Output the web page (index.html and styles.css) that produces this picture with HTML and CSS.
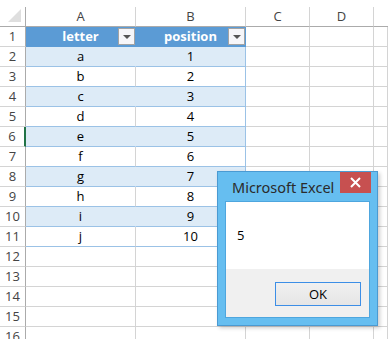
FILE: index.html
```html
<!DOCTYPE html>
<html>
<head>
	<title>Microsoft Excel</title>
	<meta charset="utf-8">
	<link rel="stylesheet" href="styles.css">
</head>
<body>
	<div class="sheet">
		<div class="row col_head">
			<div class="rh corner"><span class="corner_tri"></span></div>
			<div class="ch">A</div>
			<div class="ch">B</div>
			<div class="ch">C</div>
			<div class="ch">D</div>
			<div class="ch last"></div>
		</div>
		<div class="row">
			<div class="rh">1</div>
			<div class="c th a"><span class="th_text">letter</span><span class="filter"></span></div>
			<div class="c th b"><span class="th_text">position</span><span class="filter"></span></div>
			<div class="c"></div>
			<div class="c"></div>
			<div class="c"></div>
		</div>
		<div class="row band">
			<div class="rh">2</div>
			<div class="c td a">a</div>
			<div class="c td b">1</div>
			<div class="c"></div><div class="c"></div><div class="c"></div>
		</div>
		<div class="row">
			<div class="rh">3</div>
			<div class="c td a">b</div>
			<div class="c td b">2</div>
			<div class="c"></div><div class="c"></div><div class="c"></div>
		</div>
		<div class="row band">
			<div class="rh">4</div>
			<div class="c td a">c</div>
			<div class="c td b">3</div>
			<div class="c"></div><div class="c"></div><div class="c"></div>
		</div>
		<div class="row">
			<div class="rh">5</div>
			<div class="c td a">d</div>
			<div class="c td b">4</div>
			<div class="c"></div><div class="c"></div><div class="c"></div>
		</div>
		<div class="row band">
			<div class="rh active">6</div>
			<div class="c td a">e</div>
			<div class="c td b">5</div>
			<div class="c"></div><div class="c"></div><div class="c"></div>
		</div>
		<div class="row">
			<div class="rh">7</div>
			<div class="c td a">f</div>
			<div class="c td b">6</div>
			<div class="c"></div><div class="c"></div><div class="c"></div>
		</div>
		<div class="row band">
			<div class="rh">8</div>
			<div class="c td a">g</div>
			<div class="c td b">7</div>
			<div class="c"></div><div class="c"></div><div class="c"></div>
		</div>
		<div class="row">
			<div class="rh">9</div>
			<div class="c td a">h</div>
			<div class="c td b">8</div>
			<div class="c"></div><div class="c"></div><div class="c"></div>
		</div>
		<div class="row band">
			<div class="rh">10</div>
			<div class="c td a">i</div>
			<div class="c td b">9</div>
			<div class="c"></div><div class="c"></div><div class="c"></div>
		</div>
		<div class="row">
			<div class="rh">11</div>
			<div class="c td a">j</div>
			<div class="c td b">10</div>
			<div class="c"></div><div class="c"></div><div class="c"></div>
		</div>
		<div class="row">
			<div class="rh">12</div>
			<div class="c"></div><div class="c"></div><div class="c"></div><div class="c"></div><div class="c"></div>
		</div>
		<div class="row">
			<div class="rh">13</div>
			<div class="c"></div><div class="c"></div><div class="c"></div><div class="c"></div><div class="c"></div>
		</div>
		<div class="row">
			<div class="rh">14</div>
			<div class="c"></div><div class="c"></div><div class="c"></div><div class="c"></div><div class="c"></div>
		</div>
		<div class="row">
			<div class="rh">15</div>
			<div class="c"></div><div class="c"></div><div class="c"></div><div class="c"></div><div class="c"></div>
		</div>
		<div class="row">
			<div class="rh">16</div>
			<div class="c"></div><div class="c"></div><div class="c"></div><div class="c"></div><div class="c"></div>
		</div>
	</div>

	<div class="msgbox">
		<div class="msg_title">
			<span class="msg_caption">Microsoft Excel</span>
			<span class="msg_close">
				<svg width="11" height="11" viewBox="0 0 11 11"><path d="M1 1L10 10M10 1L1 10" stroke="#fff" stroke-width="2"/></svg>
			</span>
		</div>
		<div class="msg_body">
			<div class="msg_text">5</div>
			<div class="msg_buttons">
				<div class="msg_ok">OK</div>
			</div>
		</div>
	</div>
</body>
</html>
```

FILE: styles.css
```css
*{
	box-sizing:border-box;
	margin:0;
	padding:0;
}
body{
	background:white;
	font-family:"Open Sans","Liberation Sans",sans-serif;
	overflow:hidden;
}
.sheet{
	padding-top:7px;
}
.row{
	display:grid;
	grid-template-columns:26px 110px 110px 64px 64px 1fr;
	height:20px;
}
.rh{
	border-right:1px solid #ababab;
	border-bottom:1px solid #d4d4d4;
	color:#444;
	font-size:13px;
	text-align:center;
	line-height:19px;
}
.rh.active{
	border-right:2px solid #217346;
}
.col_head .ch{
	border-right:1px solid #d4d4d4;
	border-bottom:1px solid #ababab;
	color:#444;
	font-size:13px;
	text-align:center;
	line-height:19px;
}
.col_head .ch.last{
	border-right:none;
}
.col_head .corner{
	border-bottom:1px solid #ababab;
	position:relative;
}
.corner_tri{
	position:absolute;
	right:4px;
	bottom:4px;
	width:0;
	height:0;
	border-left:13px solid transparent;
	border-bottom:13px solid #dfdfdf;
}
.c{
	border-right:1px solid #d4d4d4;
	border-bottom:1px solid #d4d4d4;
	font-size:13px;
	line-height:19px;
	color:#000;
}
.th{
	background:#5b9bd5;
	border-right-color:#5b9bd5;
	border-bottom-color:#5b9bd5;
	color:white;
	font-weight:bold;
	display:grid;
	align-items:center;
}
.th_text,
.filter{
	grid-area:1/1;
}
.th_text{
	justify-self:center;
}
.filter{
	justify-self:end;
	align-self:start;
	margin-top:1px;
	width:17px;
	height:17px;
	background:#f6f6f9;
	border:1px solid #a3a3a3;
	display:flex;
	align-items:center;
	justify-content:center;
}
.filter::after{
	content:"";
	border-left:4px solid transparent;
	border-right:4px solid transparent;
	border-top:4px solid #555;
	margin-top:1px;
}
.td{
	text-align:center;
	border-bottom-color:#9bc2e6;
}
.td.b{
	border-right-color:#9bc2e6;
}
.band .td{
	background:#ddebf7;
}
.band .td.a{
	border-right-color:#ddebf7;
}

.msgbox{
	position:absolute;
	left:217px;
	top:171px;
	width:161px;
	height:155px;
	background:#66bef0;
	border:1px solid #4a9ad2;
	box-shadow:2px 2px 4px rgba(0,0,0,0.2);
	padding:0 7px 7px 7px;
	display:flex;
	flex-direction:column;
}
.msg_title{
	height:29px;
	display:flex;
	justify-content:space-between;
	align-items:flex-start;
}
.msg_caption{
	font-family:"Noto Sans","Open Sans",sans-serif;
	font-size:14.5px;
	color:#2b2b2b;
	margin-left:7px;
	margin-top:5px;
}
.msg_close{
	width:31px;
	height:21px;
	background:#c75050;
	margin-right:-1px;
	display:flex;
	align-items:center;
	justify-content:center;
}
.msg_body{
	flex:1;
	border:1px solid #4ea6de;
	background:#f0f0f0;
	display:flex;
	flex-direction:column;
}
.msg_text{
	background:white;
	height:67px;
	padding:24px 0 0 11px;
	font-size:13px;
	color:#000;
}
.msg_buttons{
	flex:1;
	display:flex;
	justify-content:flex-end;
	align-items:flex-start;
	padding:13px 8px 0 0;
}
.msg_ok{
	width:86px;
	height:24px;
	border:1px solid #3c8ee6;
	background:linear-gradient(#f0f0f0,#e5e5e5);
	font-size:13px;
	text-align:center;
	line-height:22px;
	color:#000;
}
```
